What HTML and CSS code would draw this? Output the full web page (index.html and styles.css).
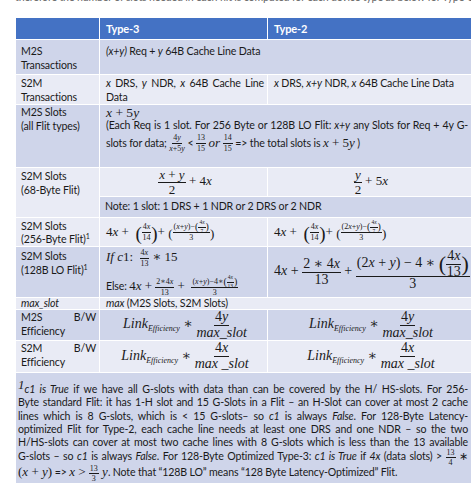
FILE: index.html
```html
<!DOCTYPE html>
<html>
<head>
<meta charset="utf-8">
<link rel="stylesheet" href="styles.css">
</head>
<body>
<div class="page">
  <div class="cut"><div class="cut-line">therefore the number of slots needed in each flit is computed for each device type as below for Type-3 and Type-2.</div></div>
  <table class="grid">
    <colgroup><col class="c1"><col class="c2"><col class="c3"></colgroup>
    <thead>
      <tr class="r-head"><th></th><th>Type-3</th><th>Type-2</th></tr>
    </thead>
    <tbody>
      <tr class="dark r-m2s">
        <td>M2S<br>Transactions</td>
        <td colspan="2"><i>(x+y)</i> Req + <i>y</i> 64B Cache Line Data</td>
      </tr>
      <tr class="light r-s2m">
        <td>S2M<br>Transactions</td>
        <td><div class="jl"><i>x</i> DRS, <i>y</i> NDR, <i>x</i> 64B Cache Line</div><div>Data</div></td>
        <td><i>x</i> DRS, <i>x+y</i> NDR, <i>x</i> 64B Cache Line Data</td>
      </tr>
      <tr class="dark r-m2sslots">
        <td>M2S Slots<br>(all Flit types)</td>
        <td colspan="2">
          <div class="m big"><i>x</i> + 5<i>y</i></div>
          <div class="jl">(Each Req is 1 slot. For 256 Byte or 128B LO Flit: <i>x+y</i> any Slots for Req + 4y G-</div>
          <div class="fl">slots for data; <span class="fr tiny"><span>4<i>y</i></span><span><i>x</i>+5<i>y</i></span></span> &lt; <span class="fr tiny"><span>13</span><span>15</span></span> <span class="m"><i>or</i></span> <span class="fr tiny"><span>14</span><span>15</span></span> =&gt; the total slots is <span class="m"><i>x</i> + 5<i>y</i></span> )</div>
        </td>
      </tr>
      <tr class="light r-s2m68">
        <td rowspan="2">S2M Slots<br>(68-Byte Flit)</td>
        <td class="ctr"><span class="m"><span class="fr cmp"><span><i>x</i> + <i>y</i></span><span>2</span></span> + 4<i>x</i></span></td>
        <td class="ctr"><span class="m"><span class="fr cmp"><span><i>y</i></span><span>2</span></span> + 5<i>x</i></span></td>
      </tr>
      <tr class="dark r-note">
        <td colspan="2">Note: 1 slot: 1 DRS + 1 NDR or 2 DRS or 2 NDR</td>
      </tr>
      <tr class="light r-256">
        <td>S2M Slots<br>(256-Byte Flit)<sup>1</sup></td>
        <td class="mcell"><span class="m">4<i>x</i> + &nbsp;<span class="bp">(</span><span class="fr tiny"><span>4<i>x</i></span><span>14</span></span><span class="bp">)</span>+ <span class="sp">(</span><span class="fr tiny"><span>(<i>x</i>+<i>y</i>)&minus;<span class="bp2">(</span><span class="fr micro"><span>4<i>x</i></span><span>7</span></span><span class="bp2">)</span></span><span>3</span></span><span class="sp">)</span></span></td>
        <td class="mcell"><span class="m">4<i>x</i> + &nbsp;<span class="bp">(</span><span class="fr tiny"><span>4<i>x</i></span><span>14</span></span><span class="bp">)</span>+ <span class="sp">(</span><span class="fr tiny"><span>(2<i>x</i>+<i>y</i>)&minus;<span class="bp2">(</span><span class="fr micro"><span>4<i>x</i></span><span>7</span></span><span class="bp2">)</span></span><span>3</span></span><span class="sp">)</span></span></td>
      </tr>
      <tr class="dark r-128">
        <td>S2M Slots<br>(128B LO Flit)<sup>1</sup></td>
        <td class="mcell">
          <div class="m if-line"><i>If c</i>1: &nbsp;<span class="fr tiny cmp"><span>4<i>x</i></span><span>13</span></span> &lowast; 15</div>
          <div class="else-line"><span class="lbl">Else:</span> <span class="m">4<i>x</i> + <span class="fr tiny cmp"><span>2&lowast;4<i>x</i></span><span>13</span></span> + &nbsp;<span class="fr tiny cmp"><span>(<i>x</i>+<i>y</i>)&minus;4&lowast;<span class="bp2">(</span><span class="fr micro"><span>4<i>x</i></span><span>13</span></span><span class="bp2">)</span></span><span>3</span></span></span></div>
        </td>
        <td class="ctr">
          <span class="m lg">4<i>x</i> + <span class="fr cmp"><span>2 &lowast; 4<i>x</i></span><span>13</span></span> + <span class="fr cmp"><span>(2<i>x</i> + <i>y</i>) &minus; 4 &lowast; <span class="bp3">(</span><span class="fr cmp"><span>4<i>x</i></span><span>13</span></span><span class="bp3">)</span></span><span>3</span></span></span>
        </td>
      </tr>
      <tr class="light r-max">
        <td><i>max_slot</i></td>
        <td colspan="2"><i>max</i> (M2S Slots, S2M Slots)</td>
      </tr>
      <tr class="dark r-bw">
        <td><div class="sp-b"><span>M2S</span><span>B/W</span></div>Efficiency</td>
        <td class="ctr"><span class="m lk"><i>Link</i><sub><i>Efficiency</i></sub> &lowast; <span class="fr cmp"><span>4<i>y</i></span><span><i>max_slot</i></span></span></span></td>
        <td class="ctr"><span class="m lk"><i>Link</i><sub><i>Efficiency</i></sub> &lowast; <span class="fr cmp"><span>4<i>y</i></span><span><i>max_slot</i></span></span></span></td>
      </tr>
      <tr class="light r-bw2">
        <td><div class="sp-b"><span>S2M</span><span>B/W</span></div>Efficiency</td>
        <td class="ctr"><span class="m lk"><i>Link</i><sub><i>Efficiency</i></sub> &lowast; <span class="fr cmp"><span>4<i>x</i></span><span><i>max _slot</i></span></span></span></td>
        <td class="ctr"><span class="m lk"><i>Link</i><sub><i>Efficiency</i></sub> &lowast; <span class="fr cmp"><span>4<i>x</i></span><span><i>max _slot</i></span></span></span></td>
      </tr>
      <tr class="dark r-foot">
        <td colspan="3" class="foot">
          <div class="jl"><sup class="m"><i>1</i></sup><i>c1 is True</i> if we have all G-slots with data than can be covered by the H/ HS-slots. For 256-</div>
          <div class="jl">Byte standard Flit: it has 1-H slot and 15 G-Slots in a Flit – an H-Slot can cover at most 2 cache</div>
          <div class="jl">lines which is 8 G-slots, which is &lt; 15 G-slots– so <i>c1</i> is always <i>False</i>. For 128-Byte Latency-</div>
          <div class="jl">optimized Flit for Type-2, each cache line needs at least one DRS and one NDR – so the two</div>
          <div class="jl">H/HS-slots can cover at most two cache lines with 8 G-slots which is less than the 13 available</div>
          <div class="jl l6">G-slots – so <i>c1</i> is always <i>False</i>. For 128-Byte Optimized Type-3: <i>c1 is True</i> if <i>4x</i> (data slots) &gt; <span class="fr tiny cmp"><span>13</span><span>4</span></span> &lowast;</div>
          <div class="last"><span class="m">(<i>x</i> + <i>y</i>)</span> =&gt; <span class="m"><i>x</i> &gt; <span class="fr tiny cmp"><span>13</span><span>3</span></span> <i>y</i></span>. Note that “128B LO” means “128 Byte Latency-Optimized” Flit.</div>
        </td>
      </tr>
    </tbody>
  </table>
</div>
</body>
</html>
```
FILE: styles.css
```css
html, body {
  margin: 0;
  padding: 0;
  background: #ffffff;
}
body {
  font-family: Lato, "Open Sans", "Liberation Sans", sans-serif;
  font-size: 10.6px;
  letter-spacing: -0.15px;
  color: #1a1a1a;
}
.page {
  padding-left: 15px;
  width: 456px;
}
.cut {
  height: 3px;
  overflow: hidden;
  display: flex;
  align-items: flex-end;
}
.cut-line {
  line-height: 12px;
  white-space: nowrap;
  color: #666;
  font-size: 10.6px;
}
.grid {
  margin-top: 14px;
  width: 456px;
  border-collapse: collapse;
  table-layout: fixed;
}
.c1 { width: 84px; }
.c2 { width: 168px; }
.c3 { width: 204px; }
.grid th, .grid td {
  border: 1px solid #ffffff;
  padding: 1px 3px 1px 5px;
  vertical-align: top;
  text-align: left;
  line-height: 13.5px;
}
.grid td:not(:first-child) {
  padding-left: 6px;
}
.grid th {
  background: #4472c4;
  color: #ffffff;
  font-weight: 700;
  font-size: 11px;
  vertical-align: middle;
  padding-left: 6px;
}
.dark td { background: #cfd5ea; }
.light td { background: #e9ebf5; }
.r-head { height: 22px; }
.r-m2s { height: 35px; }
.r-m2s td { padding-top: 5px; }
.r-s2m { height: 29px; }
.r-s2m td { padding-top: 2px; padding-bottom: 0; }
.r-m2sslots { height: 63px; }
.r-m2sslots td { padding-top: 1px; }
.r-s2m68 { height: 29px; }
.r-s2m68 td { padding-top: 0; padding-bottom: 0; }
.r-s2m68 td:first-child { padding-top: 2px; }
.r-note { height: 21px; }
.r-note td { vertical-align: middle; }
.r-256 { height: 29px; }
.r-256 td:first-child { line-height: 12.5px; padding-top: 2px; padding-bottom: 0; }
.r-128 { height: 48px; }
.r-128 td:first-child { padding-top: 3px; }
.r-max { height: 11px; }
.r-max td { line-height: 11px; padding-top: 0; padding-bottom: 0; }
.r-bw { height: 31px; }
.r-bw td:first-child, .r-bw2 td:first-child { padding-top: 1px; }
.r-bw2 { height: 32px; }
.jl {
  text-align: justify;
  text-align-last: justify;
}
.sp-b {
  display: flex;
  justify-content: space-between;
}
.ctr {
  text-align: center !important;
  vertical-align: middle !important;
}
.m {
  font-family: "Liberation Serif", "DejaVu Serif", serif;
  font-style: normal;
  font-size: 13px;
  letter-spacing: 0;
  white-space: nowrap;
}
.m i { font-style: italic; }
.big { font-size: 13.5px; line-height: 13px; }
.lg { font-size: 14px; }
.lk { font-size: 14px; }
.fr {
  display: inline-flex;
  flex-direction: column;
  align-items: center;
  vertical-align: middle;
  line-height: 1;
  font-family: "Liberation Serif", "DejaVu Serif", serif;
  letter-spacing: 0;
}
.fr > span:first-child {
  border-bottom: 1px solid currentColor;
  padding: 0 1px 1px;
}
.fr > span + span {
  padding-top: 1px;
}
.fr.cmp { line-height: 0.9; margin: -3px 0; }
.fr.tiny { font-size: 8px; }
.fr.micro { font-size: 5.5px; margin: -3px 0; }
.fl { line-height: 17px; margin-top: 1px; }
.bp {
  font-family: "Liberation Serif", serif;
  font-size: 19px;
  vertical-align: middle;
  line-height: 1;
}
.sp {
  font-family: "Liberation Serif", serif;
  font-size: 13px;
  vertical-align: middle;
  line-height: 1;
}
.bp2 {
  font-size: 10px;
  line-height: 0;
  vertical-align: middle;
}
.bp3 {
  font-size: 22px;
  line-height: 0;
  vertical-align: middle;
}
.mcell { vertical-align: middle !important; }
.r-256 .mcell { line-height: 19px; padding-top: 0; padding-bottom: 0; }
.r-128 td.mcell { vertical-align: top !important; padding-top: 0; padding-bottom: 2px; }
.if-line { line-height: 16px; margin-top: 2px; }
.else-line { line-height: 18px; margin-top: 12px; }
.lbl { font-size: 10.6px; }
sup {
  font-size: 7px;
  line-height: 0;
  vertical-align: 4px;
}
sub {
  font-size: 8px;
  line-height: 0;
  vertical-align: -3px;
}
.foot {
  padding: 10px 3px 3px 2px !important;
  line-height: 13.3px !important;
}
.foot .l6 { line-height: 15px; }
.foot .last { line-height: 16px; margin-top: 0; }
```
